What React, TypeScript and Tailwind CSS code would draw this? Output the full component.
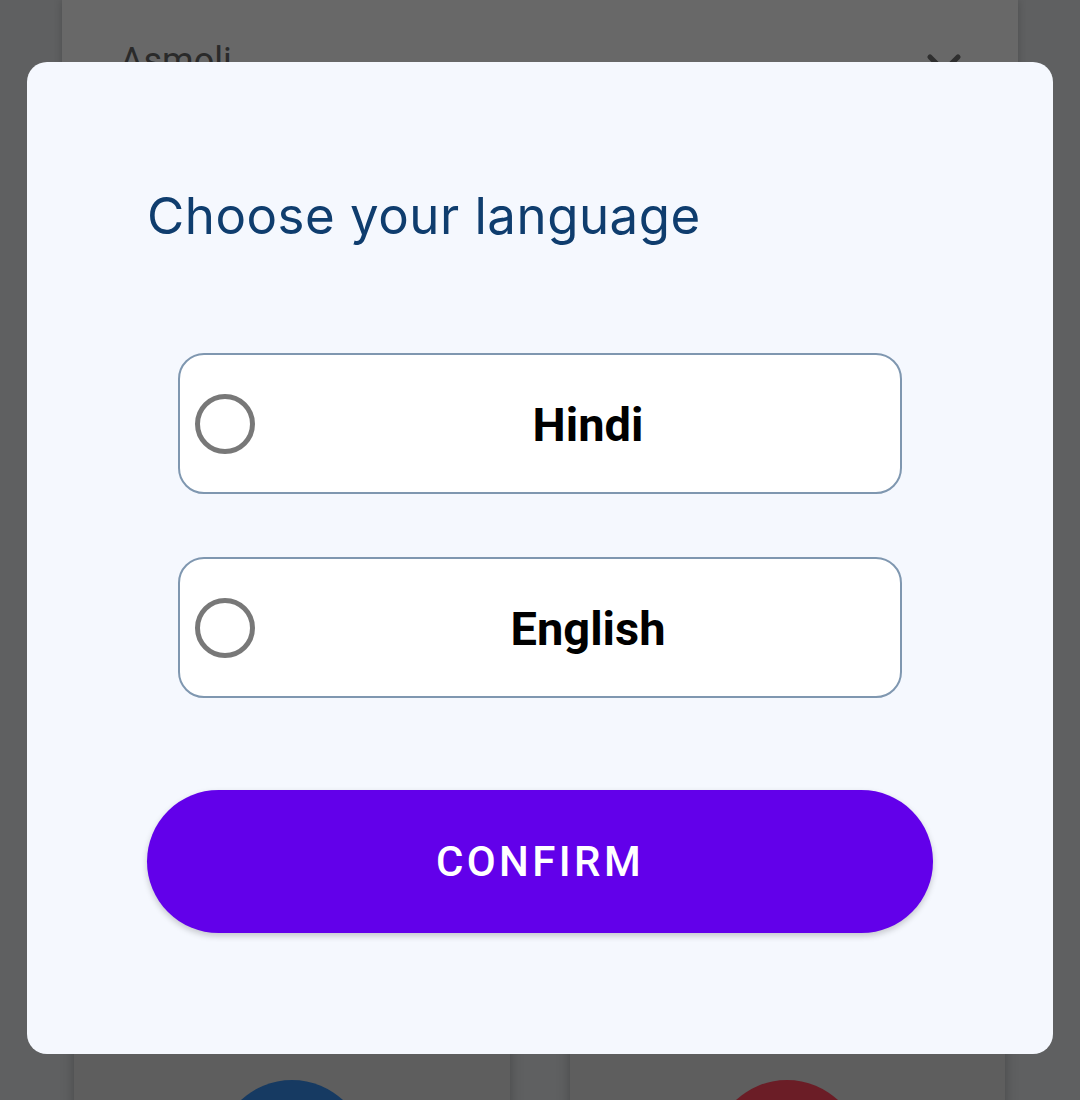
import { useState } from "react";
import { ChevronDown } from "lucide-react";

const languages = ["Hindi", "English"];

function LanguageOption({ label, selected, onSelect }: { label: string; selected: boolean; onSelect: () => void }) {
  return (
    <button
      type="button"
      onClick={onSelect}
      className="flex h-[141px] w-full items-center rounded-[26px] border-[2.5px] border-[#7f97b0] bg-white"
    >
      <span className="ml-[15px] flex h-[60px] w-[60px] shrink-0 items-center justify-center rounded-full border-[5px] border-[#787878]">
        {selected ? <span className="h-[30px] w-[30px] rounded-full bg-[#6200ea]" /> : null}
      </span>
      <span className="ml-[21px] flex-1 pt-[4px] text-center text-[47px] font-bold text-black" style={{ fontFamily: "Roboto, sans-serif" }}>
        {label}
      </span>
    </button>
  );
}

export default function App() {
  const [selected, setSelected] = useState<string | null>(null);

  return (
    <div className="relative h-[1100px] w-full overflow-hidden bg-[#5f6061]" style={{ fontFamily: "Roboto, sans-serif" }}>
      {/* page behind the dialog */}
      <div className="flex flex-col">
        <div className="mx-[62px] flex h-[320px] items-start justify-between rounded-b-[14px] bg-[#686868] pl-[58px] pr-[46px] pt-[34px] shadow-[0_0_8px_rgba(0,0,0,0.2)]">
          <span className="text-[36px] text-[#2a2a2a]">Asmoli</span>
          <ChevronDown className="mt-[2px] text-[#2f2f2f]" size={56} strokeWidth={2.2} />
        </div>
        <div className="mt-[540px] grid grid-cols-2 gap-[60px] px-[74px] pr-[75px]">
          <div className="flex h-[400px] justify-center bg-[#5e5e5e] pt-[220px] shadow-[0_0_12px_rgba(0,0,0,0.25)]">
            <div className="h-[180px] w-[150px] rounded-full bg-[#163a62]" />
          </div>
          <div className="flex h-[400px] justify-center bg-[#5e5e5e] pt-[220px] shadow-[0_0_12px_rgba(0,0,0,0.25)]">
            <div className="h-[180px] w-[150px] rounded-full bg-[#6b1d26]" />
          </div>
        </div>
      </div>

      {/* dialog */}
      <div className="absolute left-[27px] top-[62px] flex h-[992px] w-[1026px] flex-col rounded-[20px] bg-[#f5f8fe] px-[120px]">
        <h2
          className="mt-[122px] text-[51px] font-normal leading-[64px] tracking-[0.5px] text-[#0f3d6e]"
          style={{ fontFamily: "Inter, sans-serif" }}
        >
          Choose your language
        </h2>
        <div className="mx-[31px] mt-[105px] flex flex-col gap-[63px]">
          {languages.map((lang) => (
            <LanguageOption key={lang} label={lang} selected={selected === lang} onSelect={() => setSelected(lang)} />
          ))}
        </div>
        <button
          type="button"
          className="mt-[92px] h-[143px] w-full rounded-full bg-[#6200ea] text-[42px] font-medium uppercase tracking-[3.4px] text-white shadow-[0_3px_6px_rgba(0,0,0,0.2)]"
        >
          Confirm
        </button>
      </div>
    </div>
  );
}
